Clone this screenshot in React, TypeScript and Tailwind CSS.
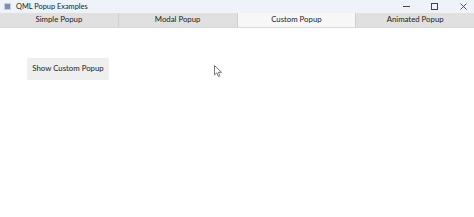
import React from "react";

export default function App() {
  const tabs = ["Simple Popup", "Modal Popup", "Custom Popup", "Animated Popup"];
  return (
    <div className="w-[474px] h-[217px] bg-white overflow-hidden relative" style={{ fontFamily: 'Lato, "Open Sans", sans-serif' }}>
      <div className="h-[13px] bg-[#eef3f9] flex items-center relative">
        <div className="w-[7px] h-[7px] ml-[4px] bg-[#7d8fae] border border-[#c5cfdf]" />
        <span className="ml-[5px] text-[7.4px] leading-none text-[#222]">QML Popup Examples</span>
        <div className="ml-auto mr-[6px] flex items-center gap-[18.5px] h-full">
          <div className="w-[10px] flex justify-center items-center">
            <div className="w-[7px] h-px bg-[#444]" />
          </div>
          <div className="w-[10px] flex justify-center items-center">
            <div className="w-[7px] h-[7px] border border-[#444]" />
          </div>
          <div className="w-[10px] flex justify-center items-center">
            <svg width="7" height="7" viewBox="0 0 7 7"><path d="M0.5 0.5L6.5 6.5M6.5 0.5L0.5 6.5" stroke="#444" strokeWidth="0.9" /></svg>
          </div>
        </div>
      </div>
      <div className="flex h-[15px] border-b border-[#d8d8d8]">
        {tabs.map((t, i) => (
          <div
            key={t}
            className={
              "flex-1 flex items-center justify-center whitespace-nowrap text-[7.8px] text-[#222] border-r border-[#cfcfcf] last:border-r-0 " +
              (i === 2 ? "bg-[#f7f7f7]" : "bg-[#e0e0e0]")
            }
          >
            {t}
          </div>
        ))}
      </div>
      <div className="pl-[27px] pt-[30px]">
        <div className="w-[82px] h-[22px] bg-[#efefef] flex items-center justify-center whitespace-nowrap text-[7.8px] text-[#222]">
          Show Custom Popup
        </div>
      </div>
      <svg className="absolute left-[214px] top-[65px]" width="9" height="13" viewBox="0 0 9 13">
        <path d="M0.5 0.5 L0.5 10 L2.8 7.8 L4.4 11.5 L5.9 10.8 L4.4 7.3 L7.5 7.3 Z" fill="white" stroke="#555" strokeWidth="0.8" />
      </svg>
    </div>
  );
}
